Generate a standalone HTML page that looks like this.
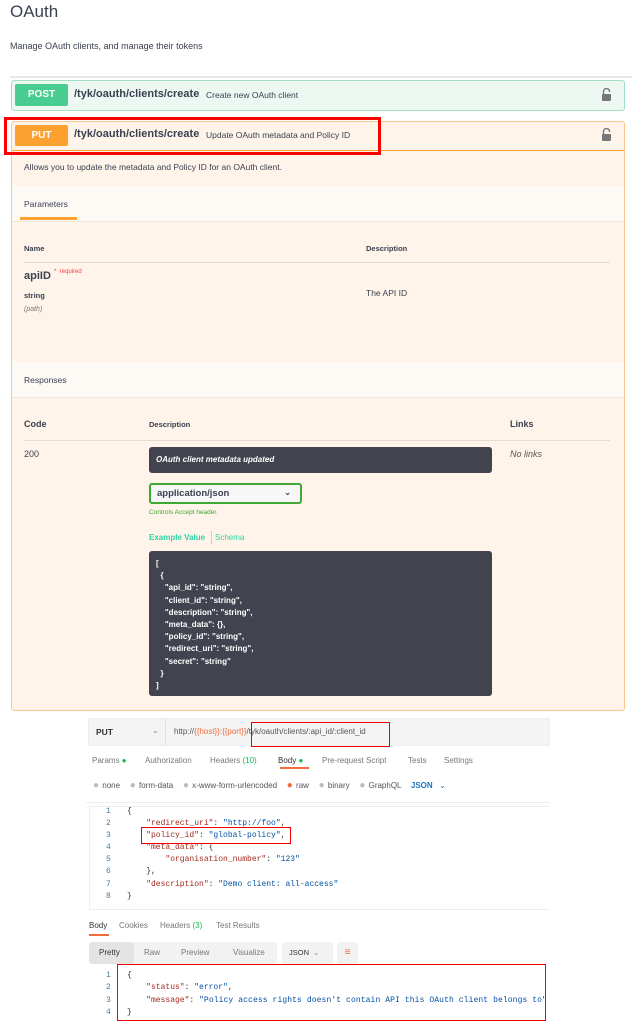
<!DOCTYPE html>
<html><head><meta charset="utf-8"><style>
*{margin:0;padding:0;box-sizing:border-box}
body{width:635px;height:1024px;background:#fff;font-family:"Liberation Sans",sans-serif;position:relative;overflow:hidden;color:#3b4151}
.a{position:absolute;white-space:nowrap}
pre.a{white-space:pre}
.mono{font-family:"Liberation Mono",monospace}
</style></head><body>
<div class="a" style="left:10px;top:2px;font-size:17px;color:#3b4151">OAuth</div>
<div class="a" style="left:10px;top:41px;font-size:9px">Manage OAuth clients, and manage their tokens</div>
<div class="a" style="left:10px;top:76px;width:622px;height:2px;background:#e8e8e8"></div>
<div class="a" style="left:11px;top:80px;width:614px;height:31px;background:#edf8f3;border:1px solid #9fe0c3;border-radius:3px"></div>
<div class="a" style="left:15px;top:84px;width:53px;height:22px;background:#49cc90;border-radius:2px;color:#fff;font-weight:bold;font-size:10px;text-align:center;line-height:22px">POST</div>
<div class="a" style="left:74px;top:88px;font-size:11px;font-weight:bold;color:#3b4151">/tyk/oauth/clients/create</div>
<div class="a" style="left:206px;top:90px;font-size:8.5px">Create new OAuth client</div>
<svg class="a" style="left:601px;top:88px" width="11" height="13" viewBox="0 0 11 13"><path d="M2.5 6V3.5a3 3 0 0 1 6 0V4" fill="none" stroke="#777" stroke-width="1.4"/><rect x="1" y="6" width="9" height="7" rx="1" fill="#777"/></svg>
<div class="a" style="left:11px;top:121px;width:614px;height:590px;background:#fef4ea;border:1px solid #fcc68d;border-radius:3px"></div>
<div class="a" style="left:12px;top:150px;width:612px;height:1px;background:#fca130"></div>
<div class="a" style="left:15px;top:125px;width:53px;height:21px;background:#fca130;border-radius:2px;color:#fff;font-weight:bold;font-size:10px;text-align:center;line-height:21px">PUT</div>
<div class="a" style="left:74px;top:128px;font-size:11px;font-weight:bold;color:#3b4151">/tyk/oauth/clients/create</div>
<div class="a" style="left:206px;top:130px;font-size:8.5px">Update OAuth metadata and Policy ID</div>
<svg class="a" style="left:601px;top:128px" width="11" height="13" viewBox="0 0 11 13"><path d="M2.5 6V3.5a3 3 0 0 1 6 0V4" fill="none" stroke="#777" stroke-width="1.4"/><rect x="1" y="6" width="9" height="7" rx="1" fill="#777"/></svg>
<div class="a" style="left:4px;top:117px;width:377px;height:38px;border:3px solid #f00"></div>
<div class="a" style="left:24px;top:162px;font-size:8.5px">Allows you to update the metadata and Policy ID for an OAuth client.</div>
<div class="a" style="left:12px;top:186px;width:612px;height:36px;background:#fdfaf6;border-bottom:1px solid #f0e6da"></div>
<div class="a" style="left:24px;top:199px;font-size:8.5px">Parameters</div>
<div class="a" style="left:20px;top:217px;width:57px;height:3px;background:#fca130"></div>
<div class="a" style="left:24px;top:244px;font-size:7.5px;font-weight:bold">Name</div>
<div class="a" style="left:366px;top:244px;font-size:7.5px;font-weight:bold">Description</div>
<div class="a" style="left:24px;top:262px;width:586px;height:1px;background:#e6dccf"></div>
<div class="a" style="left:24px;top:270px;font-size:11px;font-weight:bold">apiID</div>
<div class="a" style="left:54px;top:269px;font-size:6px;color:#f93e3e">* &nbsp;required</div>
<div class="a" style="left:24px;top:291px;font-size:7.5px;font-weight:bold">string</div>
<div class="a" style="left:24px;top:306px;font-size:7px;font-style:italic;color:#777">(path)</div>
<div class="a" style="left:366px;top:288px;font-size:8.5px">The API ID</div>
<div class="a" style="left:12px;top:362px;width:612px;height:36px;background:#fdfaf6;border-bottom:1px solid #f0e6da"></div>
<div class="a" style="left:24px;top:375px;font-size:8.5px">Responses</div>
<div class="a" style="left:24px;top:419px;font-size:9px;font-weight:bold">Code</div>
<div class="a" style="left:149px;top:420px;font-size:7.5px;font-weight:bold">Description</div>
<div class="a" style="left:510px;top:419px;font-size:9px;font-weight:bold">Links</div>
<div class="a" style="left:24px;top:440px;width:586px;height:1px;background:#e6dccf"></div>
<div class="a" style="left:24px;top:449px;font-size:9px">200</div>
<div class="a" style="left:510px;top:449px;font-size:9px;font-style:italic;color:#555">No links</div>
<div class="a" style="left:149px;top:447px;width:343px;height:26px;background:#41444e;border-radius:3px;color:#fff;font-size:8px;font-weight:bold;font-style:italic;padding:8px 7px">OAuth client metadata updated</div>
<div class="a" style="left:149px;top:483px;width:153px;height:21px;background:#f7f7f7;border:2px solid #41a833;border-radius:3px;font-size:9.5px;font-weight:bold;padding:3px 6px">application/json<span style="position:absolute;right:9px;top:3px;font-size:8px">&#8964;</span></div>
<div class="a" style="left:149px;top:509px;font-size:6.5px;color:#41a833">Controls Accept header.</div>
<div class="a" style="left:149px;top:533px;font-size:8px;font-weight:bold;color:#2fd3a6">Example Value</div>
<div class="a" style="left:211px;top:531px;width:1px;height:13px;background:#ccc"></div>
<div class="a" style="left:215px;top:533px;font-size:8px;color:#2fd3a6">Schema</div>
<div class="a" style="left:149px;top:551px;width:343px;height:145px;background:#41444e;border-radius:3px"></div>
<pre class="a" style="left:156px;top:558px;font-family:'Liberation Sans',sans-serif;font-size:8px;font-weight:bold;color:#fff;line-height:12.2px">[
  {
    "api_id": "string",
    "client_id": "string",
    "description": "string",
    "meta_data": {},
    "policy_id": "string",
    "redirect_uri": "string",
    "secret": "string"
  }
]</pre>
<div class="a" style="left:88px;top:718px;width:462px;height:28px;background:#f4f4f4;border:1px solid #eee"></div>
<div class="a" style="left:165px;top:718px;width:1px;height:28px;background:#e2e2e2"></div>
<div class="a" style="left:96px;top:727px;font-size:8.5px;font-weight:bold;color:#333">PUT</div>
<div class="a" style="left:152px;top:726px;font-size:8px;color:#888">&#8964;</div>
<div class="a" style="left:174px;top:727px;font-size:8px;color:#555">http://<span style="color:#f26b3a">{{host}}</span>:<span style="color:#f26b3a">{{port}}</span>/tyk/oauth/clients/:api_id/:client_id</div>
<div class="a" style="left:251px;top:722px;width:139px;height:25px;border:1.5px solid #e00"></div>
<div class="a" style="left:92px;top:756px;font-size:8px;color:#777">Params <span style="color:#0cbb52">●</span></div>
<div class="a" style="left:145px;top:756px;font-size:8px;color:#777">Authorization</div>
<div class="a" style="left:210px;top:756px;font-size:8px;color:#777">Headers <span style="color:#0cbb52">(10)</span></div>
<div class="a" style="left:278px;top:756px;font-size:8px;color:#333">Body <span style="color:#0cbb52">●</span></div>
<div class="a" style="left:280px;top:767px;width:29px;height:2px;background:#f26b3a"></div>
<div class="a" style="left:322px;top:756px;font-size:8px;color:#777">Pre-request Script</div>
<div class="a" style="left:408px;top:756px;font-size:8px;color:#777">Tests</div>
<div class="a" style="left:444px;top:756px;font-size:8px;color:#777">Settings</div>
<div class="a" style="left:93px;top:780px;font-size:8px;color:#555;word-spacing:1px"><span style="color:#bbb;font-size:10px">●</span> none &nbsp; <span style="color:#bbb;font-size:10px">●</span> form-data &nbsp; <span style="color:#bbb;font-size:10px">●</span> x-www-form-urlencoded &nbsp; <span style="color:#f26b3a;font-size:10px">●</span> raw &nbsp; <span style="color:#bbb;font-size:10px">●</span> binary &nbsp; <span style="color:#bbb;font-size:10px">●</span> GraphQL &nbsp; <b style="color:#1a74c9">JSON</b> &nbsp;<span style="color:#1a74c9">&#8964;</span></div>
<div class="a" style="left:86px;top:802px;width:464px;height:1px;background:#eee"></div>
<div class="a" style="left:89px;top:806px;width:461px;height:104px;border:1px solid #eee;border-right:none"></div>
<pre class="a mono" style="left:106px;top:806px;font-size:8px;line-height:12.1px;color:#4a7b9d">1
2
3
4
5
6
7
8</pre>
<pre class="a mono" style="left:127px;top:806px;font-size:8px;line-height:12.1px;color:#333">{
    <span style="color:#a3291f">"redirect_uri"</span>: <span style="color:#0451a5">"http://foo"</span>,
    <span style="color:#a3291f">"policy_id"</span>: <span style="color:#0451a5">"global-policy"</span>,
    <span style="color:#a3291f">"meta_data"</span>: {
        <span style="color:#a3291f">"organisation_number"</span>: <span style="color:#0451a5">"123"</span>
    },
    <span style="color:#a3291f">"description"</span>: <span style="color:#0451a5">"Demo client: all-access"</span>
}</pre>
<div class="a" style="left:141px;top:827px;width:150px;height:17px;border:1.5px solid #e00"></div>
<div class="a" style="left:89px;top:921px;font-size:8px;color:#333">Body</div>
<div class="a" style="left:89px;top:934px;width:20px;height:2px;background:#f26b3a"></div>
<div class="a" style="left:119px;top:921px;font-size:8px;color:#777">Cookies</div>
<div class="a" style="left:160px;top:921px;font-size:8px;color:#777">Headers <span style="color:#0cbb52">(3)</span></div>
<div class="a" style="left:216px;top:921px;font-size:8px;color:#777">Test Results</div>
<div class="a" style="left:89px;top:942px;width:188px;height:22px;background:#f2f2f2;border-radius:3px"></div>
<div class="a" style="left:89px;top:942px;width:45px;height:22px;background:#e4e4e4;border-radius:3px"></div>
<div class="a" style="left:99px;top:948px;font-size:8px;color:#333">Pretty</div>
<div class="a" style="left:144px;top:948px;font-size:8px;color:#777">Raw</div>
<div class="a" style="left:181px;top:948px;font-size:8px;color:#777">Preview</div>
<div class="a" style="left:233px;top:948px;font-size:8px;color:#777">Visualize</div>
<div class="a" style="left:282px;top:942px;width:51px;height:22px;background:#f2f2f2;border-radius:3px;font-size:7.5px;color:#333;padding:6px 7px">JSON &nbsp;<span style="color:#888">&#8964;</span></div>
<div class="a" style="left:337px;top:942px;width:21px;height:22px;background:#f2f2f2;border-radius:3px;color:#f26b3a;font-size:10px;text-align:center;line-height:22px">&#8801;</div>
<pre class="a mono" style="left:106px;top:970px;font-size:8px;line-height:12.3px;color:#4a7b9d">1
2
3
4</pre>
<pre class="a mono" style="left:127px;top:970px;font-size:8px;line-height:12.3px;color:#333">{
    <span style="color:#a3291f">"status"</span>: <span style="color:#0451a5">"error"</span>,
    <span style="color:#a3291f">"message"</span>: <span style="color:#0451a5;letter-spacing:0.1px">"Policy access rights doesn't contain API this OAuth client belongs to"</span>
}</pre>
<div class="a" style="left:117px;top:964px;width:429px;height:57px;border:1.5px solid #e00"></div>
</body></html>
